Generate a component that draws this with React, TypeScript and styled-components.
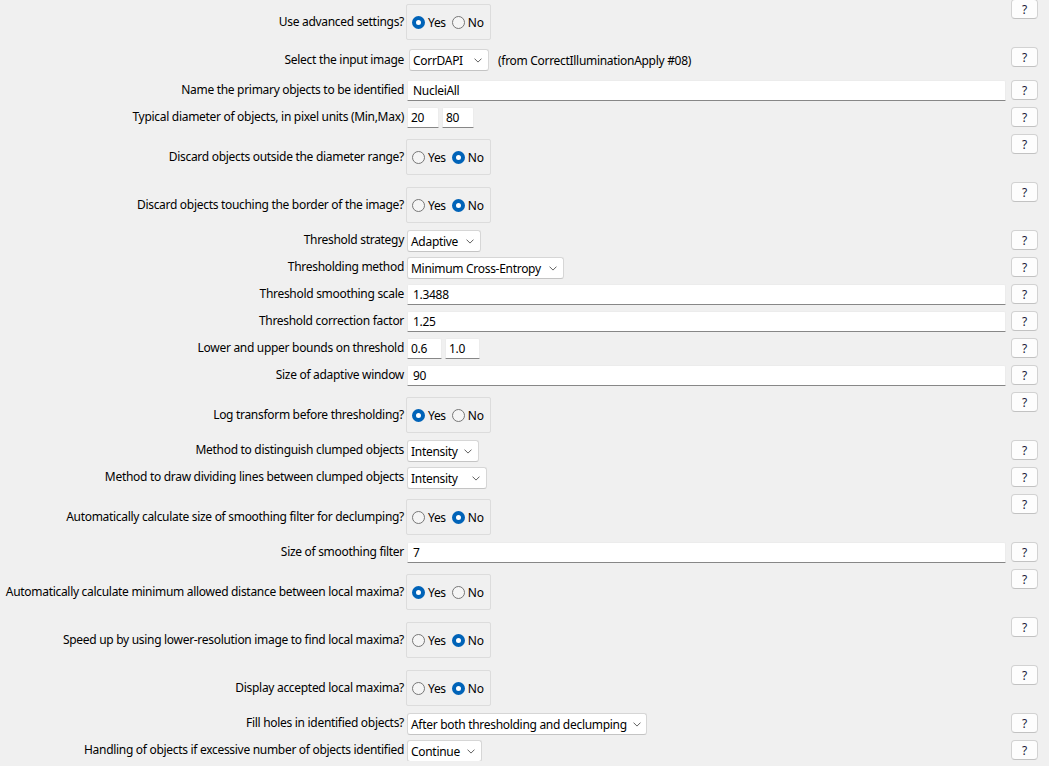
import React from 'react'
import styled, { createGlobalStyle } from 'styled-components'

const GlobalStyle = createGlobalStyle`
  html, body {
    margin: 0;
    padding: 0;
    background: #f0f0f0;
    overflow: hidden;
  }
  body {
    font-family: "Noto Sans", "Open Sans", sans-serif;
    font-size: 12px;
    letter-spacing: -0.3px;
    color: #000;
  }
`

type Setting =
  | { kind: 'radio'; label: string; value: boolean }
  | { kind: 'text'; label: string; value: string }
  | { kind: 'pair'; label: string; values: [string, string]; width: number }
  | { kind: 'choice'; label: string; value: string; width: number; note?: string }

const settings: Setting[] = [
  { kind: 'radio', label: 'Use advanced settings?', value: true },
  { kind: 'choice', label: 'Select the input image', value: 'CorrDAPI', width: 80, note: '(from CorrectIlluminationApply #08)' },
  { kind: 'text', label: 'Name the primary objects to be identified', value: 'NucleiAll' },
  { kind: 'pair', label: 'Typical diameter of objects, in pixel units (Min,Max)', values: ['20', '80'], width: 32 },
  { kind: 'radio', label: 'Discard objects outside the diameter range?', value: false },
  { kind: 'radio', label: 'Discard objects touching the border of the image?', value: false },
  { kind: 'choice', label: 'Threshold strategy', value: 'Adaptive', width: 74 },
  { kind: 'choice', label: 'Thresholding method', value: 'Minimum Cross-Entropy', width: 157 },
  { kind: 'text', label: 'Threshold smoothing scale', value: '1.3488' },
  { kind: 'text', label: 'Threshold correction factor', value: '1.25' },
  { kind: 'pair', label: 'Lower and upper bounds on threshold', values: ['0.6', '1.0'], width: 35 },
  { kind: 'text', label: 'Size of adaptive window', value: '90' },
  { kind: 'radio', label: 'Log transform before thresholding?', value: true },
  { kind: 'choice', label: 'Method to distinguish clumped objects', value: 'Intensity', width: 72 },
  { kind: 'choice', label: 'Method to draw dividing lines between clumped objects', value: 'Intensity', width: 80 },
  { kind: 'radio', label: 'Automatically calculate size of smoothing filter for declumping?', value: false },
  { kind: 'text', label: 'Size of smoothing filter', value: '7' },
  { kind: 'radio', label: 'Automatically calculate minimum allowed distance between local maxima?', value: true },
  { kind: 'radio', label: 'Speed up by using lower-resolution image to find local maxima?', value: false },
  { kind: 'radio', label: 'Display accepted local maxima?', value: false },
  { kind: 'choice', label: 'Fill holes in identified objects?', value: 'After both thresholding and declumping', width: 240 },
  { kind: 'choice', label: 'Handling of objects if excessive number of objects identified', value: 'Continue', width: 75 },
]

const App: React.FC = () => {
  return (
    <>
      <GlobalStyle />
      <StyledPanel>
        {settings.map((s, i) => {
          const boxed = s.kind === 'radio'
          const noted = s.kind === 'choice' && !!s.note
          const offset = boxed ? 5 : noted ? 2 : 0
          return (
            <StyledRow key={i} tall={boxed} wide={noted}>
              <StyledLabel offset={offset} boxed={boxed}>
                {s.label}
              </StyledLabel>
              <StyledControl offset={offset}>
                {s.kind === 'radio' && (
                  <StyledRadioBox>
                    <StyledOption>
                      <StyledDot checked={s.value} />
                      Yes
                    </StyledOption>
                    <StyledOption>
                      <StyledDot checked={!s.value} />
                      No
                    </StyledOption>
                  </StyledRadioBox>
                )}
                {s.kind === 'text' && <StyledInput>{s.value}</StyledInput>}
                {s.kind === 'pair' && (
                  <>
                    <StyledInput w={s.width}>{s.values[0]}</StyledInput>
                    <StyledInput w={s.width}>{s.values[1]}</StyledInput>
                  </>
                )}
                {s.kind === 'choice' && (
                  <>
                    <StyledSelect w={s.width} shift={noted}>
                      <span>{s.value}</span>
                      <svg width="8" height="5" viewBox="0 0 8 5">
                        <path d="M0.5 0.6 L4 4.1 L7.5 0.6" fill="none" stroke="#606060" strokeWidth="1" />
                      </svg>
                    </StyledSelect>
                    {s.note && <StyledNote>{s.note}</StyledNote>}
                  </>
                )}
              </StyledControl>
              <StyledHelp>?</StyledHelp>
            </StyledRow>
          )
        })}
      </StyledPanel>
    </>
  )
}

const StyledPanel = styled.div`
  display: flex;
  flex-direction: column;
  gap: 6px;
  margin-top: -1px;
  width: 1049px;
`

const StyledRow = styled.div<{ tall?: boolean; wide?: boolean }>`
  display: grid;
  grid-template-columns: 404px 607px 27px;
  height: ${props => (props.tall ? 42 : props.wide ? 27 : 21)}px;
`

const StyledLabel = styled.div<{ offset: number; boxed: boolean }>`
  display: flex;
  align-items: center;
  justify-content: flex-end;
  white-space: nowrap;
  padding-top: ${props => props.offset}px;
  height: ${props => (props.boxed ? 36 : props.offset === 2 ? 23 : 21)}px;
  box-sizing: content-box;
  margin-top: -1px;
`

const StyledControl = styled.div<{ offset: number }>`
  display: flex;
  align-items: flex-start;
  gap: 3px;
  padding-top: ${props => props.offset}px;
  padding-left: ${props => (props.offset === 5 ? 2 : 3)}px;
  padding-right: 5px;
`

const StyledRadioBox = styled.div`
  display: flex;
  align-items: center;
  gap: 6px;
  width: 85px;
  height: 36px;
  box-sizing: border-box;
  padding-left: 5px;
  border: 1px solid #dcdcdc;
  border-radius: 2px;
`

const StyledOption = styled.div`
  display: flex;
  align-items: center;
  gap: 3px;
`

const StyledDot = styled.span<{ checked: boolean }>`
  display: inline-block;
  width: 13px;
  height: 13px;
  box-sizing: border-box;
  border-radius: 50%;
  background: ${props => (props.checked ? '#fff' : '#f5f5f5')};
  border: ${props => (props.checked ? '4px solid #0063b8' : '1px solid #777')};
`

const StyledInput = styled.div<{ w?: number }>`
  display: flex;
  align-items: center;
  height: 21px;
  box-sizing: border-box;
  width: ${props => (props.w ? `${props.w}px` : '100%')};
  padding-left: ${props => (props.w ? 3 : 5)}px;
  background: #fff;
  border: 1px solid #ececec;
  border-bottom-color: #878787;
  border-radius: 2px 2px 0 0;
  white-space: nowrap;
`

const StyledSelect = styled.div<{ w: number; shift?: boolean }>`
  display: flex;
  align-items: center;
  justify-content: space-between;
  flex-shrink: 0;
  width: ${props => props.w}px;
  height: 22px;
  box-sizing: border-box;
  margin-left: ${props => (props.shift ? 2 : 0)}px;
  padding: 0 6px 0 3px;
  background: #fff;
  border: 1px solid #d6d6d6;
  border-bottom-color: #c4c4c4;
  border-radius: 3px;
  white-space: nowrap;

  svg {
    flex-shrink: 0;
    margin-left: 6px;
  }
`

const StyledNote = styled.div`
  display: flex;
  align-items: center;
  height: 22px;
  margin-left: 6px;
  white-space: nowrap;
`

const StyledHelp = styled.div`
  display: flex;
  align-items: center;
  justify-content: center;
  width: 27px;
  height: 20px;
  box-sizing: border-box;
  background: #fdfdfd;
  border: 1px solid #d2d2d2;
  border-bottom-color: #c2c2c2;
  border-radius: 4px;
  color: #1a1a3a;
  font-size: 12px;
`

export default App
